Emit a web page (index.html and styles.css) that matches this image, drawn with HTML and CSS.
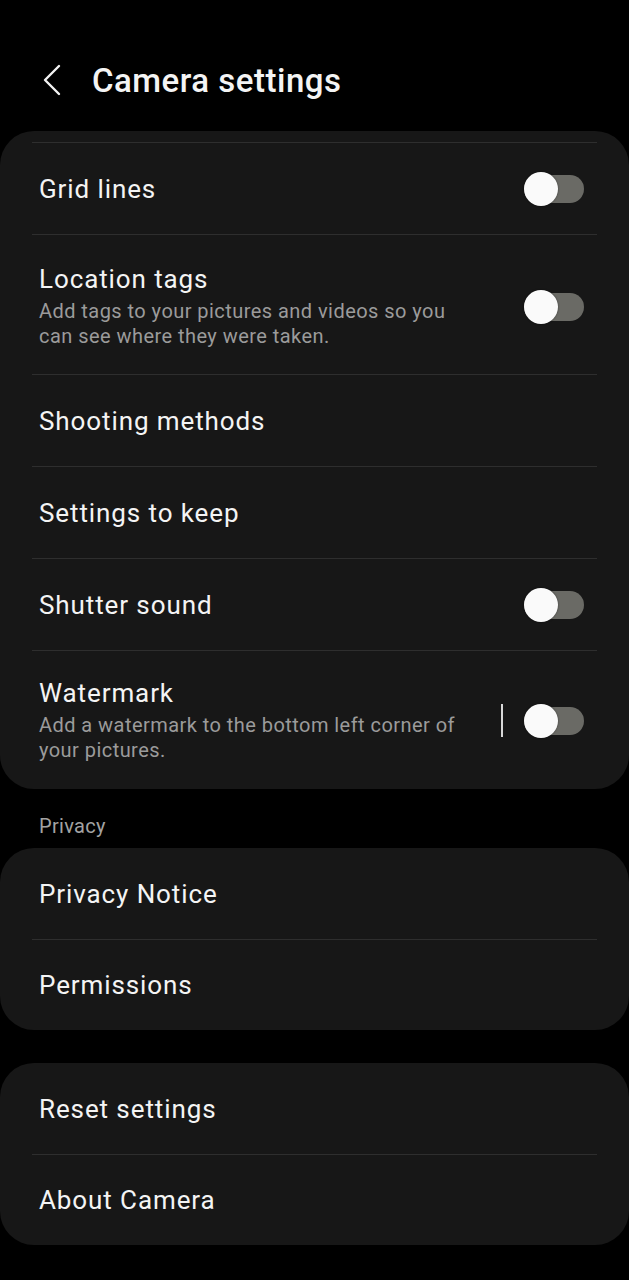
FILE: index.html
```html
<!DOCTYPE html>
<html>
<head>
    <meta charset="UTF-8">
    <title>Camera settings</title>
    <link rel="stylesheet" href="styles.css">
</head>
<body>
    <header class="top-bar">
        <svg class="back" width="20" height="32" viewBox="0 0 20 32">
            <polyline points="17,2 3,16 17,30" fill="none" stroke="#f2f2f2" stroke-width="2.4" stroke-linecap="round" stroke-linejoin="round"/>
        </svg>
        <h1>Camera settings</h1>
    </header>

    <section class="card">
        <div class="list">
            <div class="cut"></div>
            <div class="row">
                <div class="text"><div class="title">Grid lines</div></div>
                <div class="switch"><span class="knob"></span></div>
            </div>
            <div class="row tall">
                <div class="text">
                    <div class="title">Location tags</div>
                    <div class="sub">Add tags to your pictures and videos so you can see where they were taken.</div>
                </div>
                <div class="switch"><span class="knob"></span></div>
            </div>
            <div class="row">
                <div class="text"><div class="title">Shooting methods</div></div>
            </div>
            <div class="row">
                <div class="text"><div class="title">Settings to keep</div></div>
            </div>
            <div class="row">
                <div class="text"><div class="title">Shutter sound</div></div>
                <div class="switch"><span class="knob"></span></div>
            </div>
            <div class="row tall last">
                <div class="text">
                    <div class="title">Watermark</div>
                    <div class="sub">Add a watermark to the bottom left corner of your pictures.</div>
                </div>
                <span class="sep"></span>
                <div class="switch"><span class="knob"></span></div>
            </div>
        </div>
    </section>

    <div class="label">Privacy</div>

    <section class="card">
        <div class="list">
            <div class="row">
                <div class="text"><div class="title">Privacy Notice</div></div>
            </div>
            <div class="row">
                <div class="text"><div class="title">Permissions</div></div>
            </div>
        </div>
    </section>

    <section class="card gap">
        <div class="list">
            <div class="row">
                <div class="text"><div class="title">Reset settings</div></div>
            </div>
            <div class="row">
                <div class="text"><div class="title">About Camera</div></div>
            </div>
        </div>
    </section>
</body>
</html>
```

FILE: styles.css
```css
body {
    margin: 0;
    background: #000;
    color: #f4f4f4;
    font-family: Roboto, "Liberation Sans", sans-serif;
}
.top-bar {
    height: 131px;
    display: flex;
    align-items: center;
    padding: 29px 0 0 42px;
    box-sizing: border-box;
}
.back {
    display: block;
    margin-right: 30px;
}
h1 {
    margin: 0;
    font-size: 33px;
    font-weight: 500;
    letter-spacing: 0.5px;
}
.card {
    background: #171717;
    border-radius: 34px;
}
.card.gap {
    margin-top: 33px;
}
.list {
    padding: 0 32px;
}
.cut {
    height: 11px;
}
.row {
    display: flex;
    align-items: center;
    min-height: 91px;
    padding: 0 13px 0 7px;
    border-top: 1px solid #2e2e2e;
}
.list > .row:first-child {
    border-top: none;
}
.list > .row:last-child {
    min-height: 90px;
}
.row.tall,
.list > .row.tall:last-child {
    padding-top: 29px;
    padding-bottom: 25px;
    min-height: 0;
}
.list > .row.tall.last {
    padding-top: 27px;
    padding-bottom: 26px;
}
.text {
    flex: 1;
}
.title {
    font-size: 26px;
    line-height: 30px;
    letter-spacing: 0.9px;
}
.sub {
    max-width: 430px;
    margin-top: 5px;
    font-size: 20px;
    line-height: 25px;
    letter-spacing: 0.45px;
    color: #9b9b9b;
}
.sep {
    width: 2px;
    height: 33px;
    background: #d8d8d8;
    margin-right: 21px;
}
.switch {
    width: 60px;
    height: 28px;
    border-radius: 14px;
    background: #6a6a65;
    display: flex;
    align-items: center;
}
.knob {
    width: 34px;
    height: 34px;
    flex: none;
    border-radius: 50%;
    background: #fafafa;
    box-shadow: 0 0 2px rgba(0,0,0,0.5);
}
.label {
    padding: 24px 39px 9px;
    font-size: 20px;
    line-height: 26px;
    color: #a3a3a3;
    letter-spacing: 0.3px;
}
```
